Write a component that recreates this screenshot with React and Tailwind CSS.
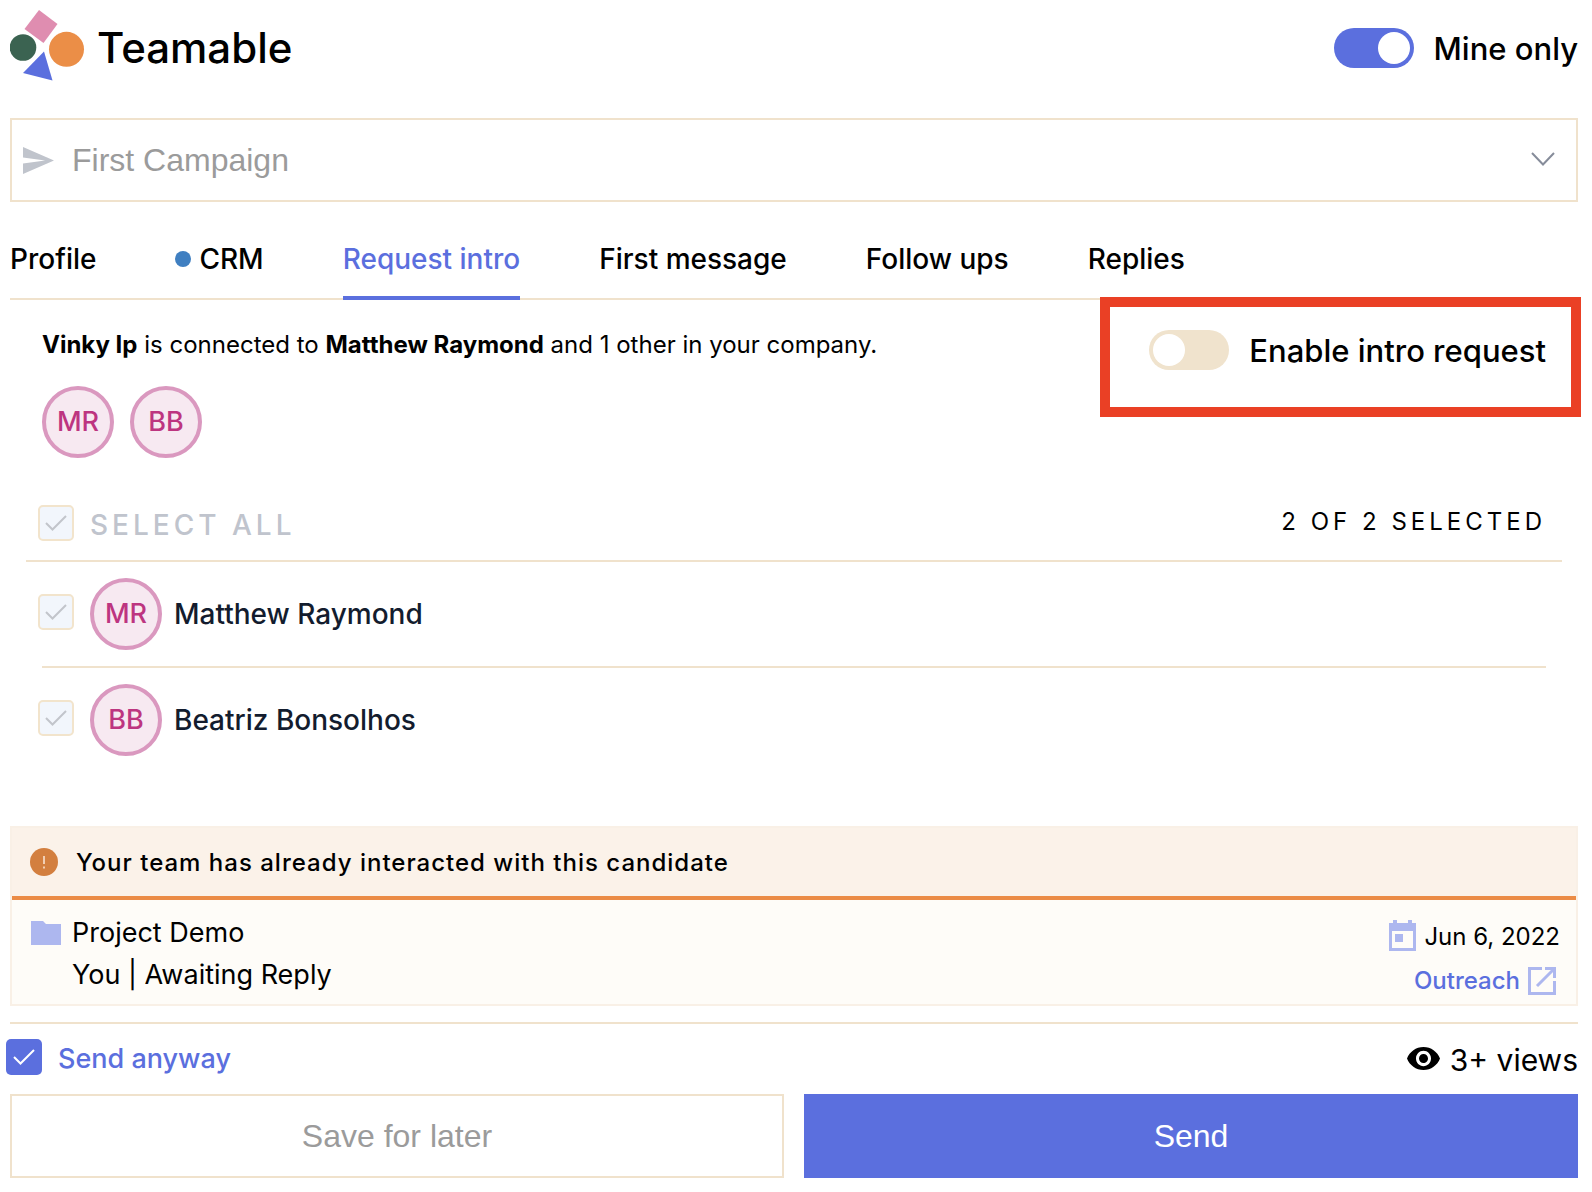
import { useState } from "react";

const tabs = ["Profile", "CRM", "Request intro", "First message", "Follow ups", "Replies"];

const people = [
  { initials: "MR", name: "Matthew Raymond" },
  { initials: "BB", name: "Beatriz Bonsolhos" },
];

function Logo() {
  return (
    <svg width="76" height="76" viewBox="0 0 76 76" aria-hidden="true">
      <path d="M29 0 47.500 14 33.500 33 14.500 19Z" fill="#df8db0" />
      <circle cx="13" cy="37.500" r="13.300" fill="#3b6351" />
      <circle cx="56.500" cy="39.300" r="17.500" fill="#eb8e47" />
      <path d="M34 41.500 42.500 70.500 13 63Z" fill="#5b6fde" />
    </svg>
  );
}

function Toggle({ label, defaultChecked }) {
  return (
    <label className="flex cursor-pointer items-center gap-5">
      <input type="checkbox" role="switch" defaultChecked={defaultChecked} className="peer sr-only" />
      <span className="flex h-10 w-20 justify-start rounded-full bg-[#f0e3cd] p-1 peer-checked:justify-end peer-checked:bg-[#5b6fde]">
        <span className="size-8 rounded-full bg-white" />
      </span>
      <span className="pt-[2px] text-[31px] leading-[38px] font-medium">{label}</span>
    </label>
  );
}

function CheckBox({ id, disabled }) {
  return (
    <span className="grid size-9 shrink-0 place-items-center">
      <input
        id={id}
        type="checkbox"
        defaultChecked
        disabled={disabled}
        className="col-start-1 row-start-1 size-9 appearance-none rounded-[5px] bg-[#5b6fde] disabled:border-2 disabled:border-[#f2e4cc] disabled:bg-[#f2f6fc]"
      />
      <svg
        width="22"
        height="18"
        viewBox="0 0 22 18"
        fill="none"
        strokeWidth="2"
        className={
          disabled
            ? "pointer-events-none col-start-1 row-start-1 stroke-[#c2c5cb]"
            : "pointer-events-none col-start-1 row-start-1 stroke-white"
        }
      >
        <path d="M1 9 7.500 15.500 21 2" />
      </svg>
    </span>
  );
}

function Avatar({ initials }) {
  return (
    <span className="flex size-[72px] shrink-0 items-center justify-center rounded-full border-4 border-[#da98bf] bg-[#f7e9f1] text-[27px] font-medium text-[#bd3580]">
      {initials}
    </span>
  );
}

export default function App() {
  const [active, setActive] = useState("Request intro");

  return (
    <main className="min-h-screen bg-white pr-[14px] pb-[14px] pl-[10px] font-['Inter',sans-serif] text-black">
      <header className="flex h-24 items-center justify-between">
        <div className="flex items-center gap-[11px]">
          <Logo />
          <h1 className="text-[42px] leading-[48px] font-medium">Teamable</h1>
        </div>
        <Toggle label="Mine only" defaultChecked />
      </header>

      <div className="mt-[22px] grid h-[84px] items-center border-2 border-[#f0e2cc]">
        <select
          aria-label="Campaign"
          className="col-start-1 row-start-1 h-full w-full appearance-none bg-transparent pl-[60px] font-['Liberation_Sans',sans-serif] text-[32px] text-[#9b9b9b]"
        >
          <option>First Campaign</option>
        </select>
        <div className="pointer-events-none col-start-1 row-start-1 flex items-center justify-between pr-[21px] pl-[11px]">
          <svg width="31" height="27" viewBox="2 3 21 18" preserveAspectRatio="none" fill="#c0c4cc">
            <path d="M2 21 23 12 2 3v7l15 2-15 2z" />
          </svg>
          <svg width="24" height="16" viewBox="0 0 24 16" fill="none" stroke="#868c9a" strokeWidth="2">
            <path d="M1 1 12 12.500 23 1" />
          </svg>
        </div>
      </div>

      <nav role="tablist" className="flex h-[98px] gap-[79px] border-b-2 border-[#f0e2cc]">
        {tabs.map((tab) => (
          <button
            key={tab}
            type="button"
            role="tab"
            aria-selected={tab === active}
            onClick={() => setActive(tab)}
            className="-mb-[2px] flex items-center gap-2 border-b-4 border-transparent pt-5 text-[28px] leading-9 font-medium aria-selected:border-[#5b6fde] aria-selected:text-[#5b6fde]"
          >
            {tab === "CRM" && <span className="size-4 rounded-full bg-[#3f7fc1]" />}
            {tab}
          </button>
        ))}
      </nav>

      <section className="relative flex items-start justify-between px-8 pt-[30px]">
        <div>
          <p className="text-2xl leading-[30px]">
            <b>Vinky Ip</b> is connected to <b>Matthew Raymond</b> and 1 other in your company.
          </p>
          <div className="mt-[26px] flex gap-4">
            {people.map((p) => (
              <Avatar key={p.initials} initials={p.initials} />
            ))}
          </div>
        </div>
        <Toggle label="Enable intro request" />
        <div className="pointer-events-none absolute -top-[3px] -right-[3px] h-[120px] w-[481px] border-10 border-[#ea4025]" />
      </section>

      <div className="mx-4 mt-[26px] flex h-[78px] items-center justify-between border-b-2 border-[#f0e2cc] pr-4 pl-3">
        <div className="flex items-center gap-4 pt-[2px]">
          <CheckBox id="select-all" disabled />
          <label htmlFor="select-all" className="pt-1 text-[28px] tracking-[4px] text-[#c0c4cd] font-medium">
            SELECT ALL
          </label>
        </div>
        <p className="text-2xl tracking-[4px]">2 OF 2 SELECTED</p>
      </div>
      <ul className="mx-8 divide-y-2 divide-[#f0e2cc]">
        {people.map((p) => (
          <li key={p.name} className="py-4">
            <div className="-ml-1 flex items-center">
              <div className="pb-1">
                <CheckBox id={p.initials} disabled />
              </div>
              <label htmlFor={p.initials} className="ml-4 flex items-center gap-3 text-[28px] font-medium">
                <Avatar initials={p.initials} />
                <span className="text-[#131c2e]">{p.name}</span>
              </label>
            </div>
          </li>
        ))}
      </ul>

      <section className="mt-[54px] border-2 border-[#f9f0e6] bg-[#fefcf8]">
        <div className="flex h-[72px] items-center gap-[18px] border-b-4 border-[#eb8b45] bg-[#fbf2e9] pl-[18px]">
          <svg width="28" height="28" viewBox="0 0 28 28" aria-hidden="true">
            <circle cx="14" cy="14" r="14" fill="#d37f3f" />
            <path d="M14 8v8M14 18.500v2" stroke="#fbe9da" strokeWidth="1.500" />
          </svg>
          <p className="pt-[2px] text-2xl font-medium tracking-[1px]">
            Your team has already interacted with this candidate
          </p>
        </div>
        <div className="flex items-start justify-between pr-4 pb-px pl-[19px]">
          <div className="grid grid-cols-[30px_auto] gap-x-[11px] pt-3 text-[27px] leading-[42px]">
            <svg width="30" height="24" viewBox="0 0 30 24" fill="#adb7ef" className="self-center" aria-hidden="true">
              <path d="M0 0H12L15 3H30V24H0Z" />
            </svg>
            <span>Project Demo</span>
            <span className="col-start-2">You | Awaiting Reply</span>
          </div>
          <div className="flex flex-col items-end pt-[15px] text-2xl leading-[44px]">
            <div className="flex items-center gap-2">
              <svg width="27" height="31" viewBox="0 0 27 31" fill="#adb7ef" className="mb-1" aria-hidden="true">
                <path fillRule="evenodd" d="M4 0H8V3H19V0H23V3H27V31H0V3H4ZM3 11V28H24V11Z" />
                <path d="M6 14H14V22H6Z" />
              </svg>
              <time dateTime="2022-06-06">Jun 6, 2022</time>
            </div>
            <a href="#outreach" className="flex items-center gap-2 pr-1 font-medium text-[#5b6fde]">
              Outreach
              <svg width="28" height="28" viewBox="0 0 28 28" fill="none" stroke="#adb7ef" strokeWidth="3" aria-hidden="true">
                <path d="M14 1.500H1.500V26.500H26.500V14M17 1.500H26.500V11M26 2 9 19" />
              </svg>
            </a>
          </div>
        </div>
      </section>

      <footer className="mt-4 border-t-2 border-[#f0e2cc]">
        <div className="flex h-[70px] items-center justify-between">
          <div className="-ml-1 flex items-center gap-4">
            <div className="pb-1">
              <CheckBox id="send-anyway" />
            </div>
            <label htmlFor="send-anyway" className="text-[27px] font-medium text-[#5b6fde]">
              Send anyway
            </label>
          </div>
          <p className="flex items-center gap-[10px] text-[30px] leading-10">
            <svg width="33" height="23" viewBox="1 4.500 22 15" preserveAspectRatio="none" className="mb-[2px]" aria-hidden="true">
              <path d="M12 4.500C7 4.500 2.730 7.610 1 12c1.730 4.390 6 7.500 11 7.500s9.270-3.110 11-7.500c-1.730-4.390-6-7.500-11-7.500zM12 17c-2.760 0-5-2.240-5-5s2.240-5 5-5 5 2.240 5 5-2.240 5-5 5zm0-8c-1.660 0-3 1.340-3 3s1.340 3 3 3 3-1.340 3-3-1.340-3-3-3z" />
            </svg>
            <span className="pt-[2px]">3+ views</span>
          </p>
        </div>
        <div className="grid grid-cols-2 gap-5 font-['Liberation_Sans',sans-serif] text-[32px]">
          <button type="button" className="h-[84px] border-2 border-[#f0e2cc] text-[#9b9b9b]">
            Save for later
          </button>
          <button type="button" className="h-[84px] bg-[#5b6fde] text-white">
            Send
          </button>
        </div>
      </footer>
    </main>
  );
}
